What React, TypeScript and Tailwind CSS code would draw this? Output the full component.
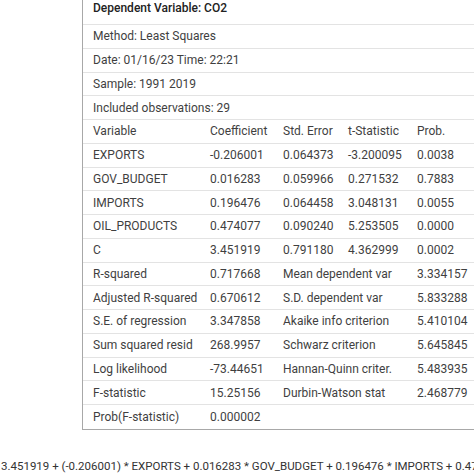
import React from 'react'

// Saída de regressão (EViews) recortada: tabela + equação
const coefs = [
  ['EXPORTS', '-0.206001', '0.064373', '-3.200095', '0.0038'],
  ['GOV_BUDGET', '0.016283', '0.059966', '0.271532', '0.7883'],
  ['IMPORTS', '0.196476', '0.064458', '3.048131', '0.0055'],
  ['OIL_PRODUCTS', '0.474077', '0.090240', '5.253505', '0.0000'],
  ['C', '3.451919', '0.791180', '4.362999', '0.0002'],
]

const stats = [
  ['R-squared', '0.717668', 'Mean dependent var', '3.334157'],
  ['Adjusted R-squared', '0.670612', 'S.D. dependent var', '5.833288'],
  ['S.E. of regression', '3.347858', 'Akaike info criterion', '5.410104'],
  ['Sum squared resid', '268.9957', 'Schwarz criterion', '5.645845'],
  ['Log likelihood', '-73.44651', 'Hannan-Quinn criter.', '5.483935'],
  ['F-statistic', '15.25156', 'Durbin-Watson stat', '2.468779'],
  ['Prob(F-statistic)', '0.000002', '', ''],
]

const info = ['Method: Least Squares', 'Date: 01/16/23 Time: 22:21', 'Sample: 1991 2019', 'Included observations: 29']

const row = 'h-[23.76px] border-b border-[#e3e3e3] flex items-center'
const grid = 'h-[23.76px] border-b border-[#e3e3e3] grid grid-cols-[117px_73px_65px_69px_1fr] items-center'

export default function App() {
  return (
    <div
      className="w-[474px] h-[474px] overflow-hidden bg-white text-[12px] text-[#3f3f3f]"
      style={{ fontFamily: 'Roboto, "Liberation Sans", sans-serif' }}
    >
      <div className="ml-[82px] w-[460px] border-l border-b border-[#a8a8a8]">
        <div className="h-[25px] border-b border-[#e3e3e3] pl-[10px] leading-[16px] font-medium text-[#222]">
          Dependent Variable: CO2
        </div>
        {info.map((t) => (
          <div key={t} className={`${row} pl-[10px]`}>
            {t}
          </div>
        ))}
        <div className={grid}>
          <span className="pl-[10px]">Variable</span>
          <span className="pl-[10px]">Coefficient</span>
          <span className="pl-[10px]">Std. Error</span>
          <span className="pl-[10px]">t-Statistic</span>
          <span className="pl-[10px]">Prob.</span>
        </div>
        {coefs.map((r) => (
          <div key={r[0]} className={grid}>
            {r.map((c, i) => (
              <span key={i} className="pl-[10px]">
                {c}
              </span>
            ))}
          </div>
        ))}
        {stats.map((r, idx) => (
          <div
            key={r[0]}
            className={`h-[23.76px] grid grid-cols-[117px_73px_134px_1fr] items-center ${
              idx === stats.length - 1 ? '' : 'border-b border-[#e3e3e3]'
            }`}
          >
            {r.map((c, i) => (
              <span key={i} className="pl-[10px]">
                {c}
              </span>
            ))}
          </div>
        ))}
      </div>
      <div className="mt-[28px] whitespace-nowrap pl-[1px] text-[11.5px] text-[#333]">
        3.451919 + (-0.206001) * EXPORTS + 0.016283 * GOV_BUDGET + 0.196476 * IMPORTS + 0.474077 * OIL_PRODUCTS
      </div>
    </div>
  )
}
